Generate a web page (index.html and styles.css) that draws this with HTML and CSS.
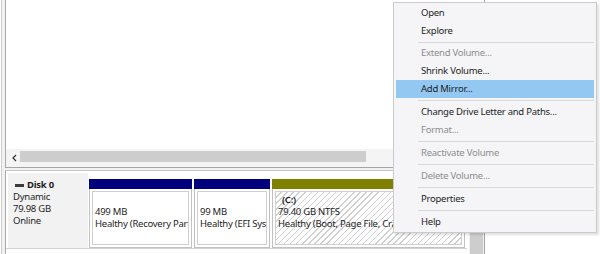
FILE: index.html
```html
<!DOCTYPE html>
<html lang="en">
  <head>
    <meta charset="UTF-8" />
    <title>Disk Management</title>
    <link rel="stylesheet" href="styles.css">
  </head>
  <body>
    <div class="console">
      <div class="top-pane">
        <div class="volume-list"></div>
        <div class="hscroll">
          <span class="arrow">
            <svg width="5" height="8" viewBox="0 0 5 8"><path d="M4 1 L1 4 L4 7" fill="none" stroke="#333" stroke-width="1.2"/></svg>
          </span>
          <div class="hthumb"></div>
        </div>
      </div>

      <div class="bottom-pane">
        <div class="disk-row">
          <div class="disk-label">
            <div class="disk-name"><span class="disk-icon"></span>Disk 0</div>
            <div>Dynamic</div>
            <div>79.98 GB</div>
            <div>Online</div>
          </div>

          <div class="partition p-recovery">
            <div class="bar"></div>
            <div class="box">
              <div class="inner">
                <div class="vol-name">&nbsp;</div>
                <div>499 MB</div>
                <div>Healthy (Recovery Partition)</div>
              </div>
            </div>
          </div>

          <div class="partition p-efi">
            <div class="bar"></div>
            <div class="box">
              <div class="inner">
                <div class="vol-name">&nbsp;</div>
                <div>99 MB</div>
                <div>Healthy (EFI System Partition)</div>
              </div>
            </div>
          </div>

          <div class="partition p-system">
            <div class="bar"></div>
            <div class="box">
              <div class="inner hatched">
                <div class="vol-name">(C:)</div>
                <div>79.40 GB NTFS</div>
                <div>Healthy (Boot, Page File, Crash Dump)</div>
              </div>
            </div>
          </div>
        </div>
        <div class="vscroll"><div class="vthumb"></div></div>
      </div>
    </div>

    <!-- context menu for the C: volume -->
    <ul class="menu">
      <li class="item">Open</li>
      <li class="item">Explore</li>
      <li class="sep first"></li>
      <li class="item disabled">Extend Volume...</li>
      <li class="item">Shrink Volume...</li>
      <li class="item active">Add Mirror...</li>
      <li class="sep"></li>
      <li class="item">Change Drive Letter and Paths...</li>
      <li class="item disabled">Format...</li>
      <li class="sep"></li>
      <li class="item disabled">Reactivate Volume</li>
      <li class="sep"></li>
      <li class="item disabled">Delete Volume...</li>
      <li class="sep"></li>
      <li class="item">Properties</li>
      <li class="sep"></li>
      <li class="item">Help</li>
    </ul>
  </body>
</html>
```

FILE: styles.css
```css
body {
  margin: 0;
  width: 600px;
  height: 254px;
  overflow: hidden;
  background: #fff;
  font-family: "Noto Sans", "Open Sans", sans-serif;
  font-size: 9.5px;
  letter-spacing: -0.25px;
  color: #1e1e1e;
  position: relative;
}
.console {
  width: 479px;
  height: 254px;
  margin-left: 1px;
  border-left: 1px solid #cdcdcd;
  border-right: 1px solid #a6a6a6;
  padding-left: 3px;
  background: #f2f2f2;
  display: flex;
  flex-direction: column;
}
.top-pane {
  height: 167px;
  border-left: 1px solid #a9a9a9;
  border-bottom: 1px solid #a4a4a4;
  display: flex;
  flex-direction: column;
  background: #fff;
}
.volume-list {
  flex: 1;
}
.hscroll {
  height: 18px;
  display: flex;
  align-items: flex-start;
  background: #f4f4f4;
}
.hscroll .arrow {
  width: 12px;
  height: 11px;
  margin-top: 3px;
  display: flex;
  justify-content: center;
  align-items: center;
  padding-left: 2px;
}
.hthumb {
  width: 346px;
  height: 11px;
  margin-top: 2px;
  background: #cdcdcd;
}
.bottom-pane {
  flex: 1;
  margin-top: 2px;
  border-left: 1px solid #a9a9a9;
  border-top: 1px solid #c6c6c6;
  background: #fff;
  display: flex;
}
.disk-row {
  flex: 1;
  display: flex;
  padding: 2px 0 0 2px;
  height: 75px;
  border-bottom: 1px solid #d2d2d2;
}
.disk-label {
  width: 75px;
  padding: 6px 0 0 5px;
  background: #f2f2f2;
  line-height: 12px;
}
.disk-name {
  font-weight: bold;
  display: flex;
  align-items: center;
}
.disk-icon {
  width: 9px;
  height: 3px;
  background: #3c3c3c;
  margin: 0 3px 0 2px;
}
.partition {
  display: flex;
  flex-direction: column;
  padding-top: 6px;
  margin-left: 2px;
}
.p-recovery { width: 103px; margin-left: 1px; }
.p-efi { width: 76px; }
.p-system { width: 193px; }
.partition .bar {
  height: 10px;
  background: #00007f;
}
.p-system .bar {
  background: #7f7f00;
}
.partition .box {
  flex: 1;
  border: 1px solid #c2c2c2;
  border-top: none;
  padding: 2px;
}
.inner {
  height: 100%;
  box-sizing: border-box;
  border: 1px solid #cfcfcf;
  padding: 2px 0 0 2px;
  line-height: 12px;
  white-space: nowrap;
  overflow: hidden;
}
.inner.hatched {
  background: repeating-linear-gradient(135deg, #fff 0 3.3px, #d0d0d0 3.3px 4.3px);
}
.vol-name {
  font-weight: 600;
  padding-left: 4px;
}
.vscroll {
  width: 13px;
  margin-left: 2px;
  background: #f0f0f0;
  padding: 0 1px;
}
.vthumb {
  height: 100%;
  background: #cdcdcd;
}
.menu {
  position: absolute;
  left: 393px;
  top: 2px;
  width: 198px;
  margin: 0;
  padding: 1px 2px;
  list-style: none;
  background: #f5f4f7;
  border: 1px solid #cbcbcb;
  box-shadow: 2px 2px 2px rgba(0, 0, 0, 0.12);
}
.menu .item {
  height: 18px;
  line-height: 18px;
  padding-left: 25px;
  white-space: nowrap;
}
.menu .item.disabled {
  color: #8d8d8d;
}
.menu .item.active {
  background: #93c8f3;
}
.menu .sep {
  margin: 2px 0 2px 22px;
  border-top: 1px solid #d9d9d9;
}
.menu .sep.first {
  margin: 2px 0 1px 22px;
}
```
